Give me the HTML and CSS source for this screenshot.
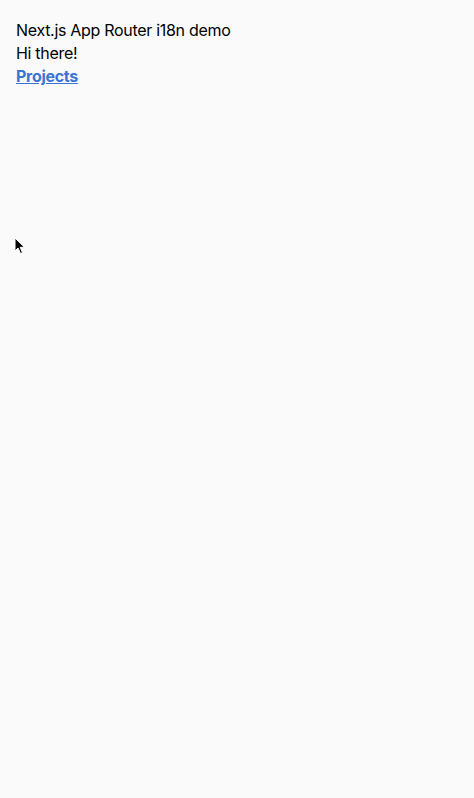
FILE: index.html
```html
<!DOCTYPE html>
<html lang="en">
<head>
<meta charset="utf-8">
<title>Next.js App Router i18n demo</title>
<link rel="stylesheet" href="styles.css">
</head>
<body>
<main class="page">
  <p class="line">Next.js App Router i18n demo</p>
  <p class="line">Hi there!</p>
  <a class="link" href="#">Projects</a>
</main>
<svg class="cursor" width="12" height="18" viewBox="0 0 12 18" aria-hidden="true">
  <path d="M1 1 L1 14 L4 11 L6.5 16.5 L8.5 15.6 L6.2 10.3 L10.5 10.3 Z" fill="#000" stroke="#fff" stroke-width="1"/>
</svg>
</body>
</html>
```

FILE: styles.css
```css
html, body {
  margin: 0;
  padding: 0;
  background: #fafafa;
  height: 100%;
}
body {
  font-family: Inter, "Noto Sans", sans-serif;
  font-size: 16px;
  line-height: 23px;
  letter-spacing: -0.3px;
  color: #000;
}
.page {
  padding: 19px 16px;
  display: flex;
  flex-direction: column;
  align-items: flex-start;
}
.line {
  margin: 0;
}
.link {
  color: #3a74d4;
  font-weight: 700;
  text-decoration: underline;
}
.cursor {
  position: absolute;
  left: 14px;
  top: 237px;
}
```
